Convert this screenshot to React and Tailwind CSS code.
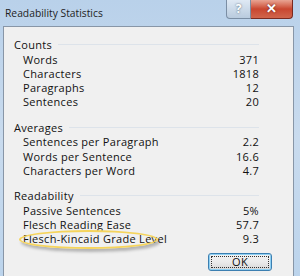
import React from "react";

const Row = ({ label, value }) => (
  <div className="flex justify-between h-[14.2px] items-center pl-[9px]">
    <span>{label}</span>
    <span>{value}</span>
  </div>
);

const Header = ({ children }) => (
  <div className="flex items-center h-[15px] gap-[6px]">
    <span>{children}</span>
    <div className="flex-1 h-px bg-[#dde3ea]" />
  </div>
);

export default function App() {
  return (
    <div
      className="relative w-[300px] h-[276px] overflow-hidden flex flex-col bg-gradient-to-b from-[#b9d1ea] via-[#c9dbee] to-[#bcd4ec] text-[#000]"
      style={{ fontFamily: '"Open Sans", "Noto Sans", sans-serif' }}
    >
      <div className="flex items-start h-[26px] shrink-0">
        <div className="pl-[5px] pt-[6px] text-[10.3px] leading-[14px] text-[#1e1e1e]">
          Readability Statistics
        </div>
        <div className="ml-auto mr-[7px] flex">
          <div className="w-[25px] h-[19px] border border-[#7b8ea4] border-t-0 rounded-bl-[4px] bg-gradient-to-b from-[#dfe9f4] to-[#b9cbde] flex items-center justify-center text-[12px] font-bold text-white [text-shadow:0_0_2px_#4a5a6a]">
            ?
          </div>
          <div className="w-[42px] h-[19px] border border-[#7a2a20] border-t-0 border-l-0 rounded-br-[4px] bg-gradient-to-b from-[#e8a493] via-[#c9462f] to-[#d0654c] flex items-center justify-center text-[13px] font-bold text-white [text-shadow:0_0_2px_#5a1a10]">
            ✕
          </div>
        </div>
      </div>
      <div className="flex-1 ml-[3px] mr-[6px] border border-b-0 border-[#8896a7] bg-[#f0f0f0] text-[11px] leading-[13px] tracking-[0.3px] text-[#111] pl-[10px] pr-[34px] pt-[10px]">
        <Header>Counts</Header>
        <Row label="Words" value="371" />
        <Row label="Characters" value="1818" />
        <Row label="Paragraphs" value="12" />
        <Row label="Sentences" value="20" />
        <div className="h-[11px]" />
        <Header>Averages</Header>
        <Row label="Sentences per Paragraph" value="2.2" />
        <Row label="Words per Sentence" value="16.6" />
        <Row label="Characters per Word" value="4.7" />
        <div className="h-[11px]" />
        <Header>Readability</Header>
        <Row label="Passive Sentences" value="5%" />
        <Row label="Flesch Reading Ease" value="57.7" />
        <Row label="Flesch-Kincaid Grade Level" value="9.3" />
        <div className="flex justify-end mr-[-13px] mt-[7px]">
          <div className="w-[64px] h-[18px] rounded-[3px] border border-[#3c7fb1] shadow-[0_0_0_1px_#8fd0f3_inset] bg-gradient-to-b from-[#f2f2f2] via-[#ebebeb] to-[#d6d6d6] p-[2px]">
            <div className="w-full h-full border border-dotted border-[#333] flex items-center justify-center text-[11px] leading-none">
              OK
            </div>
          </div>
        </div>
      </div>
      <div className="absolute left-[19px] top-[230px] w-[139px] h-[19px] rounded-[50%] border-2 border-[#f5d45c] shadow-[2px_3px_3px_rgba(0,0,0,0.25)]" />
    </div>
  );
}
